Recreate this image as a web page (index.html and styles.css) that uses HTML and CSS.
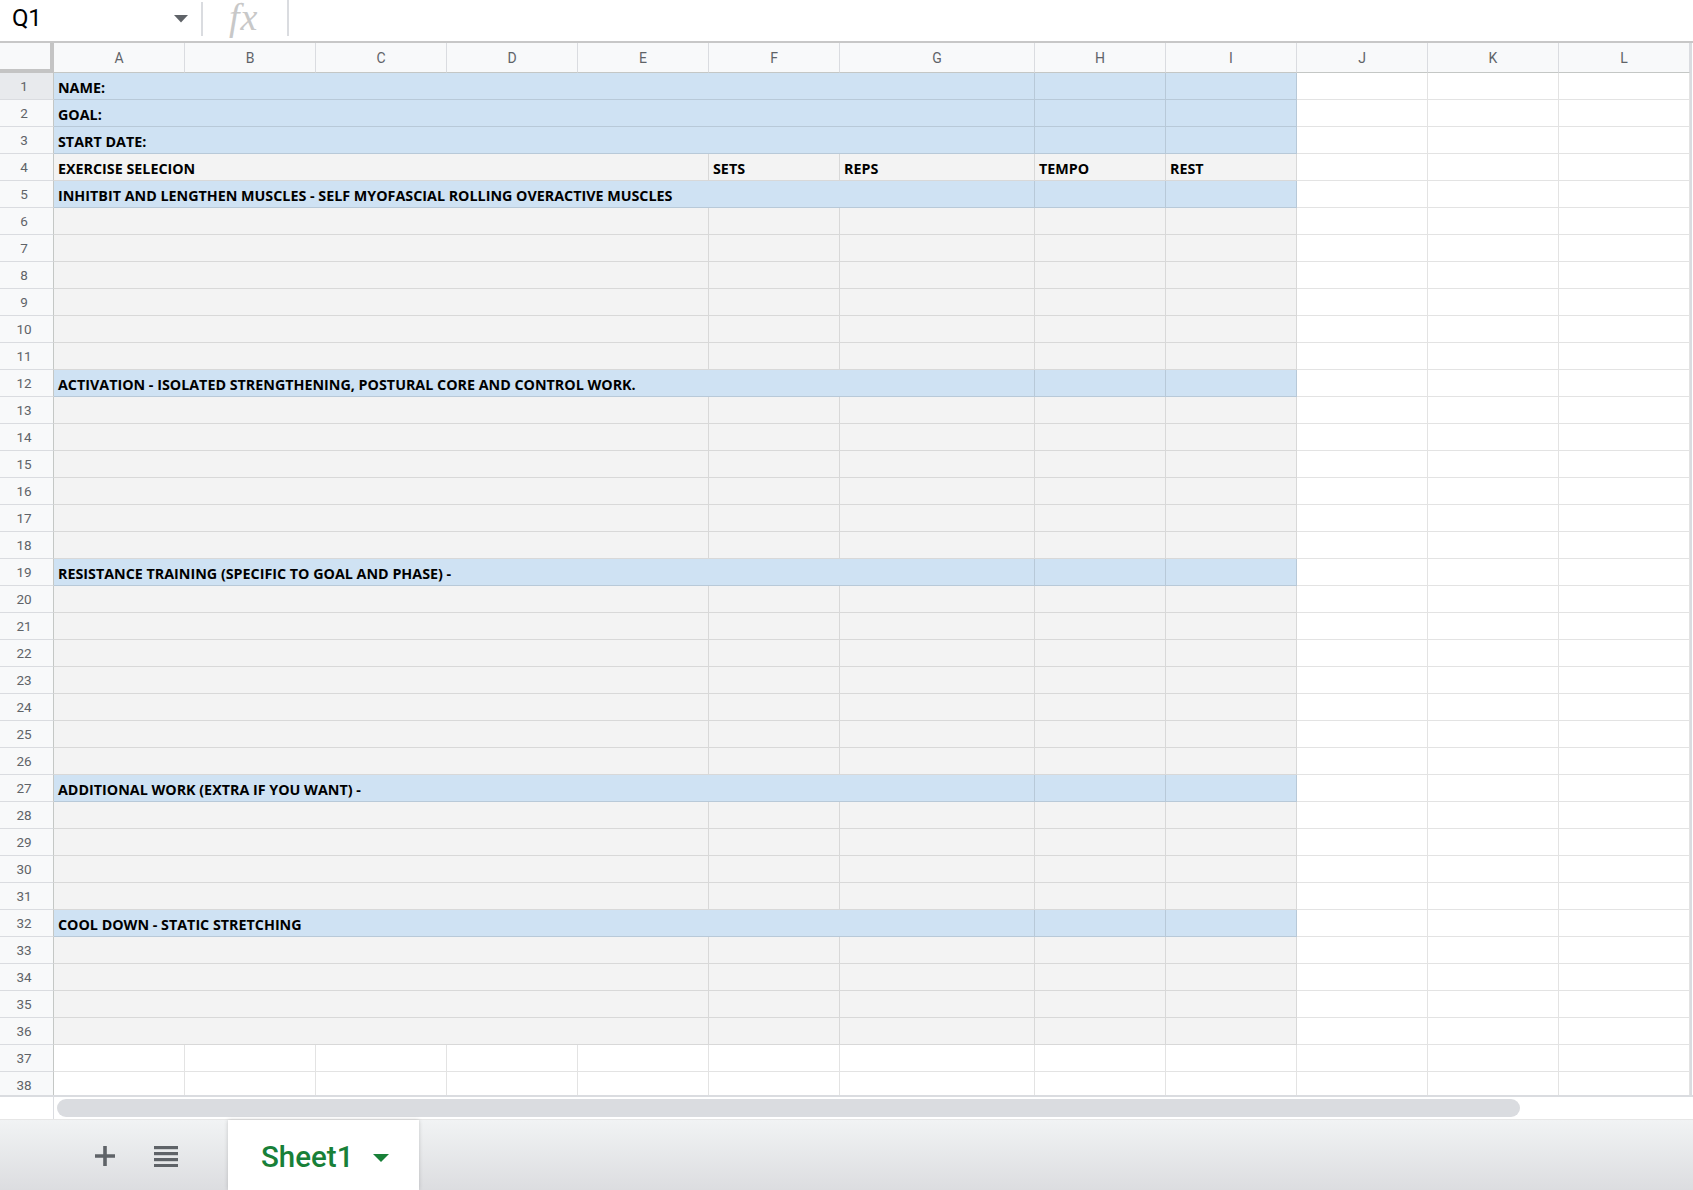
FILE: index.html
```html
<!DOCTYPE html>
<html lang="en">
<head>
    <meta charset="UTF-8">
    <meta name="viewport" content="width=device-width, initial-scale=1.0">
    <title>Workout Program - Sheet1</title>
    <link rel="stylesheet" href="styles.css">
</head>
<body>
    <div class="formula-bar">
        <div class="name-box">
            <span class="cell-ref">Q1</span>
            <svg class="name-caret" width="14" height="8" viewBox="0 0 14 8"><polygon points="0,0 14,0 7,7.5" fill="#5f6368"/></svg>
        </div>
        <div class="fx">fx</div>
        <div class="formula-input"></div>
    </div>

    <div class="sheet">
        <div class="grid" id="grid"></div>
    </div>

    <div class="scroll-strip">
        <div class="scroll-corner"></div>
        <div class="scroll-track"><div class="scroll-thumb"></div></div>
    </div>

    <div class="tab-bar">
        <div class="tab-tools">
            <svg class="tool" width="22" height="22" viewBox="0 0 22 22"><path d="M11 1v20M1 11h20" stroke="#5f6368" stroke-width="3.6"/></svg>
            <svg class="tool" width="24" height="22" viewBox="0 0 24 22">
                <rect x="0" y="1" width="24" height="3.2" fill="#5f6368"/>
                <rect x="0" y="7" width="24" height="3.2" fill="#5f6368"/>
                <rect x="0" y="13" width="24" height="3.2" fill="#5f6368"/>
                <rect x="0" y="19" width="24" height="3" fill="#5f6368"/>
            </svg>
        </div>
        <div class="sheet-tab">
            <span class="tab-name">Sheet1</span>
            <svg class="tab-caret" width="16" height="9" viewBox="0 0 16 9"><polygon points="0,0 16,0 8,8" fill="#188038"/></svg>
        </div>
    </div>

    <script>
        const columns = ['A', 'B', 'C', 'D', 'E', 'F', 'G', 'H', 'I', 'J', 'K', 'L'];

        // each row: type + label
        const rows = [
            ['info', 'NAME:'],
            ['info', 'GOAL:'],
            ['info', 'START DATE:'],
            ['head', 'EXERCISE SELECION'],
            ['info', 'INHITBIT AND LENGTHEN MUSCLES - SELF MYOFASCIAL ROLLING OVERACTIVE MUSCLES'],
            ['entry'], ['entry'], ['entry'], ['entry'], ['entry'], ['entry'],
            ['info', 'ACTIVATION - ISOLATED STRENGTHENING, POSTURAL CORE AND CONTROL WORK.'],
            ['entry'], ['entry'], ['entry'], ['entry'], ['entry'], ['entry'],
            ['info', 'RESISTANCE TRAINING (SPECIFIC TO GOAL AND PHASE) -'],
            ['entry'], ['entry'], ['entry'], ['entry'], ['entry'], ['entry'], ['entry'],
            ['info', 'ADDITIONAL WORK (EXTRA IF YOU WANT) -'],
            ['entry'], ['entry'], ['entry'], ['entry'],
            ['info', 'COOL DOWN - STATIC STRETCHING'],
            ['entry'], ['entry'], ['entry'], ['entry'],
            ['blank'], ['blank']
        ];

        function cell(cls, text, span) {
            const span_ = span ? ` style="grid-column: span ${span}"` : '';
            return `<div class="c ${cls}"${span_}>${text || ''}</div>`;
        }

        function buildGrid() {
            let html = '<div class="c corner"></div>';
            columns.forEach(col => html += `<div class="c col-head">${col}</div>`);

            rows.forEach(([type, label], i) => {
                const n = i + 1;
                html += `<div class="c row-head${n === 1 ? ' active' : ''}">${n}</div>`;

                if (type === 'info') {
                    html += cell('blue', label, 7) + cell('blue') + cell('blue');
                } else if (type === 'head') {
                    html += cell('grey', label, 5) + cell('grey', 'SETS') + cell('grey', 'REPS')
                          + cell('grey', 'TEMPO') + cell('grey', 'REST');
                } else if (type === 'entry') {
                    html += cell('grey', '', 5) + cell('grey') + cell('grey') + cell('grey') + cell('grey');
                } else {
                    for (let k = 0; k < 9; k++) html += cell('white');
                }
                html += cell('white') + cell('white') + cell('white');
            });

            document.getElementById('grid').innerHTML = html;
        }

        buildGrid();
    </script>
</body>
</html>
```

FILE: styles.css
```css
:root {
    --blue: #cfe2f3;
    --grey: #f3f3f3;
    --line: rgba(0, 0, 0, 0.11);
    --head-bg: #f8f9fa;
    --head-line: #dadce0;
}

* {
    box-sizing: border-box;
}

body {
    margin: 0;
    width: 1693px;
    height: 1190px;
    overflow: hidden;
    background: #fff;
    font-family: Roboto, 'Liberation Sans', sans-serif;
}

/* formula bar */

.formula-bar {
    display: flex;
    align-items: stretch;
    height: 43px;
    border-bottom: 2px solid #c7c7c7;
}

.name-box {
    width: 203px;
    display: flex;
    align-items: center;
    justify-content: space-between;
    padding: 0 13px 2px 12px;
    border-right: 2px solid #dadce0;
    margin: 2px 0 5px;
}

.cell-ref {
    font-size: 24px;
    color: #000;
    letter-spacing: -0.3px;
}

.name-caret {
    margin-top: 2px;
}

.fx {
    width: 86px;
    padding: 2px 0 0 26px;
    font-family: 'Liberation Serif', serif;
    font-style: italic;
    font-size: 38px;
    line-height: 30px;
    color: #c8c8c8;
    letter-spacing: 1px;
    border-right: 2px solid #dadce0;
    margin: 0 0 5px;
}

.formula-input {
    flex: 1;
}

/* grid */

.sheet {
    height: 1052px;
    overflow: hidden;
}

.grid {
    display: grid;
    grid-template-columns: 54px repeat(6, 131px) 195px repeat(5, 131px);
    grid-template-rows: 30px;
    grid-auto-rows: 27px;
    width: 1692px;
    border-right: 2px solid #dadce0;
}

.c {
    border-right: 1px solid var(--line);
    border-bottom: 1px solid var(--line);
    font-family: 'Open Sans', 'Liberation Sans', sans-serif;
    font-weight: 700;
    font-size: 14.3px;
    line-height: 16px;
    color: #000;
    white-space: nowrap;
    display: flex;
    align-items: flex-end;
    padding: 0 3px 3px 4px;
}

.corner {
    background: var(--head-bg);
    border-right: 4px solid #c4c4c4;
    border-bottom: 4px solid #c4c4c4;
}

.col-head,
.row-head {
    font-family: Roboto, 'Liberation Sans', sans-serif;
    font-weight: 400;
    color: #5f6368;
    background: var(--head-bg);
    justify-content: center;
    align-items: center;
    padding: 0;
}

.col-head {
    font-size: 14px;
    border-right-color: var(--head-line);
    border-bottom-color: #c4c7c5;
    padding-top: 1px;
}

.row-head {
    font-size: 13.5px;
    border-right-color: #c4c7c5;
    border-bottom-color: var(--head-line);
    padding: 0 5px 1px 0;
}

.row-head.active {
    background: #e8eaed;
}

.blue {
    background: var(--blue);
}

.grey {
    background: var(--grey);
}

.white {
    background: #fff;
}

/* horizontal scroll */

.scroll-strip {
    display: flex;
    height: 25px;
    border-top: 2px solid #dadce0;
    border-bottom: 1px solid #e6e6e6;
}

.scroll-corner {
    width: 54px;
    border-right: 1px solid #dadce0;
}

.scroll-track {
    flex: 1;
    padding: 2px 0 0 3px;
}

.scroll-thumb {
    width: 1463px;
    height: 18px;
    border-radius: 9px;
    background: #dadce0;
}

/* sheet tabs */

.tab-bar {
    display: flex;
    height: 70px;
    background: linear-gradient(#f1f3f4, #dcdde0);
}

.tab-tools {
    width: 228px;
    display: flex;
    align-items: center;
    gap: 38px;
    padding: 2px 0 0 94px;
}

.sheet-tab {
    width: 191px;
    background: #fff;
    box-shadow: 0 0 4px rgba(0, 0, 0, 0.18);
    display: flex;
    align-items: center;
    padding: 4px 0 0 33px;
    gap: 20px;
}

.tab-name {
    font-family: Roboto, 'Liberation Sans', sans-serif;
    font-weight: 500;
    font-size: 29.5px;
    color: #188038;
}

.tab-caret {
    margin-top: 3px;
}
```
